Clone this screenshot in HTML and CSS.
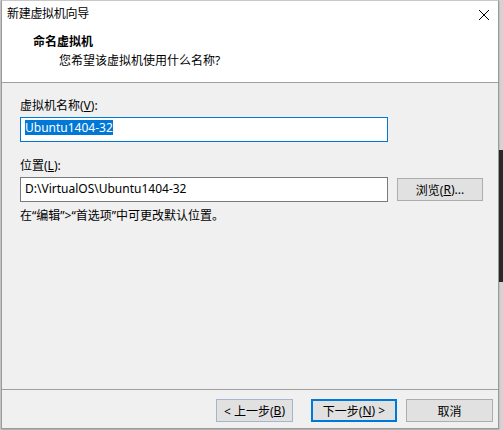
FILE: index.html
```html
<!DOCTYPE html>
<html lang="zh-CN">
<head>
<meta charset="utf-8">
<title>新建虚拟机向导</title>
<link rel="stylesheet" href="styles.css">
</head>
<body>
<div class="dialog">
  <div class="head">
    <div class="titlebar">
      <span class="title">新建虚拟机向导</span>
      <svg class="close" width="12" height="12" viewBox="0 0 12 12"><path d="M1 1 L11 11 M11 1 L1 11" stroke="#000" stroke-width="1" fill="none"/></svg>
    </div>
    <div class="header">
      <div class="h-title">命名虚拟机</div>
      <div class="h-sub">您希望该虚拟机使用什么名称?</div>
    </div>
  </div>
  <div class="content">
    <div class="label first">虚拟机名称(<u>V</u>):</div>
    <div class="field focused"><span class="sel">Ubuntu1404-32</span></div>
    <div class="label second">位置(<u>L</u>):</div>
    <div class="row">
      <div class="field">D:\VirtualOS\Ubuntu1404-32</div>
      <div class="btn browse">浏览(<u>R</u>)...</div>
    </div>
    <div class="note">在“编辑”&gt;“首选项”中可更改默认位置。</div>
  </div>
  <div class="footer">
    <div class="btn back">&lt; 上一步(<u>B</u>)</div>
    <div class="btn next">下一步(<u>N</u>) &gt;</div>
    <div class="btn cancel">取消</div>
  </div>
</div>
</body>
</html>
```
FILE: styles.css
```css
html, body {
  margin: 0;
  padding: 0;
  width: 503px;
  height: 430px;
  overflow: hidden;
}
body {
  background-color: #d4d4d4;
  background-image: linear-gradient(#2a2a2a, #2a2a2a);
  background-repeat: no-repeat;
  background-size: 4px 132px;
  background-position: 499px 150px;
  font-family: "Noto Sans", "Noto Sans CJK SC", sans-serif;
  font-size: 12px;
  color: #000;
}
.dialog {
  margin-left: 1px;
  width: 496px;
  height: 427px;
  border: 1px solid #9a9a9a;
  border-top-color: #c8c8c8;
  background: #f0f0f0;
  display: flex;
  flex-direction: column;
  box-shadow: 0 1px 2px rgba(0,0,0,0.25);
}
.head {
  background: #fff;
  height: 81px;
  border-bottom: 1px solid #a0a0a0;
  display: flex;
  flex-direction: column;
}
.titlebar {
  height: 26px;
  display: flex;
  align-items: center;
  justify-content: space-between;
  padding: 0 8px 0 5px;
}
.title {
  line-height: 26px;
  letter-spacing: -0.3px;
}
.close {
  margin-right: 0;
  margin-top: 1px;
}
.header {
  padding-left: 31px;
}
.h-title {
  font-weight: bold;
  line-height: 16px;
  margin-top: 7px;
}
.h-sub {
  padding-left: 26px;
  line-height: 16px;
  margin-top: 3px;
}
.content {
  flex: 1;
  padding-left: 18px;
  display: flex;
  flex-direction: column;
}
.label {
  line-height: 16px;
}
.label.first {
  margin-top: 15px;
}
.label.second {
  margin-top: 16px;
}
u {
  text-decoration: underline;
  text-underline-offset: 1px;
}
.field {
  box-sizing: border-box;
  width: 368px;
  height: 25px;
  margin-top: 3px;
  border: 1px solid #7a7a7a;
  background: #fff;
  padding: 0 4px;
  line-height: 22px;
  white-space: nowrap;
}
.field.focused {
  border-color: #0078d7;
  line-height: 18px;
  padding-top: 1px;
}
.sel {
  background: #0078d7;
  color: #fff;
  display: inline-block;
  line-height: 14px;
  padding: 1px 0 0;
}
.row {
  display: flex;
  align-items: flex-start;
}
.row .field {
  margin-top: 3px;
}
.btn {
  box-sizing: border-box;
  height: 23px;
  border: 1px solid #adadad;
  background: #e1e1e1;
  display: flex;
  align-items: center;
  justify-content: center;
  white-space: nowrap;
}
.browse {
  width: 86px;
  height: 23px;
  margin-left: 9px;
  margin-top: 4px;
}
.note {
  margin-top: 6px;
  line-height: 16px;
}
.footer {
  height: 39px;
  border-top: 1px solid #a0a0a0;
  display: flex;
  align-items: flex-start;
  padding-top: 9px;
  box-sizing: border-box;
  padding-left: 214px;
}
.back {
  width: 77px;
  border-color: #a3b6cb;
}
.next {
  width: 86px;
  margin-left: 18px;
  border: 2px solid #0078d7;
}
.cancel {
  width: 87px;
  margin-left: 9px;
}
```
